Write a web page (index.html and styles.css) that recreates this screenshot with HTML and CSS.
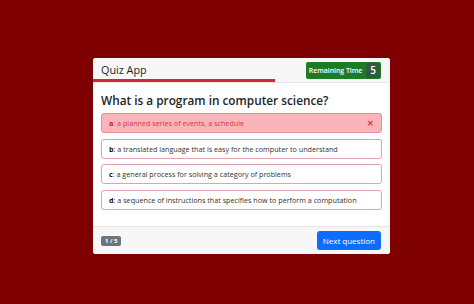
FILE: index.html
```html
<!DOCTYPE html>
<html lang="en">
<head>
    <meta charset="UTF-8">
    <meta name="viewport" content="width=device-width, initial-scale=1.0">
    <title>Quiz App</title>
    <link rel="stylesheet" href="styles.css">
</head>
<body>
    <div class="card">
        <div class="card-header">
            <div class="header-row">
                <span class="title">Quiz App</span>
                <span class="timer">Remaining Time <span class="timer-count">5</span></span>
            </div>
            <div class="progress"></div>
        </div>

        <div class="card-body">
            <h2 class="question">What is a program in computer science?</h2>
            <div class="option wrong"><b>a</b>: a planned series of events, a schedule <span class="close">&#x2715;</span></div>
            <div class="option"><b>b</b>: a translated language that is easy for the computer to understand</div>
            <div class="option"><b>c</b>: a general process for solving a category of problems</div>
            <div class="option"><b>d</b>: a sequence of instructions that specifies how to perform a computation</div>
        </div>

        <div class="card-footer">
            <span class="counter">1 / 5</span>
            <button class="next">Next question</button>
        </div>
    </div>
</body>
</html>
```

FILE: styles.css
```css
body {
    margin: 0;
    padding: 58px 0 0 93px;
    background-color: #7f0000;
    font-family: "Open Sans", "Noto Sans", sans-serif;
    color: #212529;
}
.card {
    width: 297px;
    height: 196px;
    background-color: white;
    border-radius: 3px;
    display: flex;
    flex-direction: column;
    overflow: hidden;
}
.card-header {
    background-color: #f7f7f7;
    border-bottom: 1px solid #e6e6e6;
}
.header-row {
    height: 21px;
    padding: 0 9px 0 8px;
    display: flex;
    align-items: center;
    justify-content: space-between;
}
.title {
    font-size: 10.8px;
    position: relative;
    top: 1px;
}
.timer {
    margin-top: 4px;
    background-color: #1c7c25;
    color: white;
    font-size: 6.9px;
    font-weight: 600;
    border-radius: 2px;
    padding: 0 1px 0 3px;
    height: 17px;
    display: flex;
    align-items: center;
    gap: 4px;
}
.timer-count {
    background-color: #2f5a3c;
    font-size: 10px;
    font-weight: 600;
    padding: 0 4px;
    height: 15px;
    line-height: 15px;
    border-radius: 2px;
}
.progress {
    width: 182px;
    height: 3px;
    background-color: #d1283a;
}
.card-body {
    flex: 1;
    padding: 9px 8px 0 8px;
}
.question {
    margin: 0 0 5px 0;
    font-size: 11.8px;
    font-weight: 600;
    line-height: 16px;
}
.option {
    position: relative;
    height: 18px;
    line-height: 18px;
    padding: 0 7px;
    margin-bottom: 5.5px;
    border: 1px solid #dfa3ab;
    border-radius: 3px;
    font-size: 7.2px;
    color: #333;
}
.option b {
    color: #111;
}
.wrong {
    background-color: #fbb4ba;
    border-color: #e88e97;
    color: #d93447;
}
.wrong b {
    color: #c0202f;
}
.close {
    position: absolute;
    right: 7px;
    top: 0;
    font-size: 8px;
    font-weight: bold;
    color: #d93447;
}
.card-footer {
    height: 27px;
    background-color: #f7f7f7;
    border-top: 1px solid #e6e6e6;
    padding: 0 9px 0 8px;
    display: flex;
    align-items: center;
    justify-content: space-between;
}
.counter {
    background-color: #6c757d;
    color: white;
    font-size: 6px;
    font-weight: bold;
    padding: 1px 4px;
    border-radius: 2px;
    line-height: 8px;
}
.next {
    background-color: #0d6efd;
    color: white;
    border: none;
    border-radius: 3px;
    font-family: inherit;
    font-size: 8px;
    height: 19px;
    padding: 0 6px;
}
```
